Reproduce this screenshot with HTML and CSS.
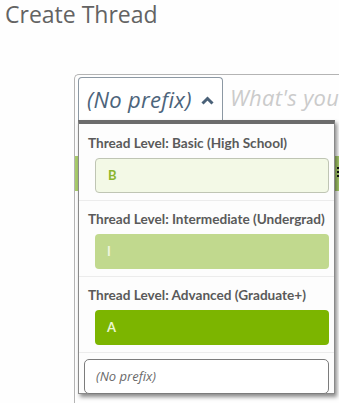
FILE: index.html
```html
<!DOCTYPE html>
<html>
<head>
<meta charset="utf-8">
<link rel="stylesheet" href="styles.css">
</head>
<body>
<h1 class="title">Create Thread</h1>
<div class="editor">
  <div class="title-row">
    <div class="prefix-btn">
      <span class="prefix-text">(No prefix)</span>
      <svg class="caret" width="13" height="9" viewBox="0 0 13 9"><path d="M1.5 7.5 L6.5 2.5 L11.5 7.5" fill="none" stroke="#4a6178" stroke-width="3"/></svg>
    </div>
    <div class="placeholder">What's your thread title?</div>
  </div>
  <div class="toolbar">
    <span class="tool-icon"><i></i><i></i><i></i></span>
  </div>
  <div class="body-area"></div>

  <div class="dropdown">
    <div class="group">
      <div class="group-label">Thread Level: Basic (High School)</div>
      <div class="opt opt-b">B</div>
    </div>
    <div class="group">
      <div class="group-label">Thread Level: Intermediate (Undergrad)</div>
      <div class="opt opt-i">I</div>
    </div>
    <div class="group">
      <div class="group-label">Thread Level: Advanced (Graduate+)</div>
      <div class="opt opt-a">A</div>
    </div>
    <div class="none-wrap">
      <div class="opt-none">(No prefix)</div>
    </div>
  </div>
</div>
</body>
</html>
```
FILE: styles.css
```css
html, body {
  margin: 0;
  padding: 0;
  background: #fefefe;
  overflow: hidden;
  width: 339px;
  height: 403px;
}
.title {
  margin: 0;
  padding: 0 0 0 5px;
  font-family: "Open Sans", sans-serif;
  font-weight: normal;
  font-size: 23px;
  line-height: 29px;
  color: #636363;
  white-space: nowrap;
}
.editor {
  position: relative;
  margin: 45px 0 0 74px;
  width: 300px;
  border-top: 1px solid #b4b4b4;
  border-left: 1px solid #b4b4b4;
  border-top-left-radius: 5px;
  height: 330px;
}
.title-row {
  display: flex;
  align-items: flex-start;
  padding: 2px 0 0 3px;
  height: 43px;
  overflow: hidden;
}
.prefix-btn {
  flex: none;
  box-sizing: border-box;
  width: 145px;
  height: 44px;
  border: 1px solid #8c98a3;
  border-bottom: none;
  border-radius: 4px 4px 0 0;
  display: flex;
  align-items: center;
  padding: 0 0 0 8px;
  font-family: "Open Sans", sans-serif;
  font-style: italic;
  font-size: 22px;
  letter-spacing: 0.3px;
  color: #4c647b;
  background: #fff;
  white-space: nowrap;
}
.prefix-text {
  margin-top: -2px;
}
.caret {
  margin-left: 9px;
  margin-top: 2px;
}
.placeholder {
  flex: none;
  padding: 5px 0 0 7px;
  font-family: "Open Sans", sans-serif;
  font-style: italic;
  font-size: 22px;
  letter-spacing: 0.3px;
  color: #cbcbcb;
  white-space: nowrap;
}
.toolbar {
  margin-top: 36px;
  height: 35px;
  background: #a9cd6c;
  position: relative;
}
.tool-icon {
  position: absolute;
  left: 262px;
  top: 11px;
  display: flex;
  flex-direction: column;
  gap: 2px;
}
.tool-icon i {
  display: block;
  width: 8px;
  height: 2px;
  background: #111;
}
.dropdown {
  position: absolute;
  left: 3px;
  top: 45px;
  box-sizing: border-box;
  width: 257px;
  height: 274px;
  background: #fdfdfd;
  border: 1px solid #8a8a8a;
  border-top: 4px solid #6c6c6c;
  box-shadow: 2px 3px 4px rgba(0,0,0,0.45);
  font-family: "Lato", sans-serif;
}
.group {
  padding: 10px 5px 7px 9px;
  border-bottom: 1px solid #ececec;
}
.group:first-child {
  padding-top: 11px;
}
.group-label {
  font-size: 13.6px;
  font-weight: bold;
  line-height: 16px;
  color: #5a5a5a;
  margin-bottom: 7px;
  white-space: nowrap;
}
.opt {
  box-sizing: border-box;
  margin-left: 7px;
  height: 35px;
  border-radius: 4px;
  padding-left: 12px;
  font-size: 13px;
  font-weight: bold;
  line-height: 35px;
}
.opt-b {
  background: #f3f9e6;
  border: 1px solid #bfc5b4;
  line-height: 33px;
  color: #8bb62c;
}
.opt-i {
  background: #c1d98e;
  color: #eef6de;
}
.opt-a {
  background: #7cb500;
  color: #eaf6d0;
}
.none-wrap {
  padding: 6px 5px 0 5px;
}
.opt-none {
  box-sizing: border-box;
  height: 35px;
  border: 1px solid #7c7c7c;
  border-radius: 5px;
  padding-left: 11px;
  font-family: "Open Sans", sans-serif;
  font-style: italic;
  font-size: 13px;
  line-height: 33px;
  color: #6a6a6a;
  background: #fff;
}
```
